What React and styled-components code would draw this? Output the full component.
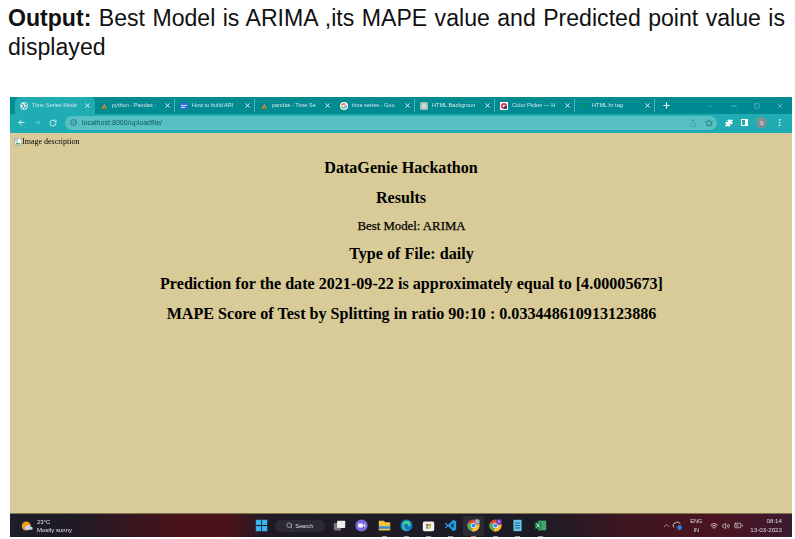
import React from "react";
import styled, { createGlobalStyle } from "styled-components";
import {
  ArrowLeft, ArrowRight, RotateCw, Info, Share, Star, Puzzle, MoreVertical, X, Plus,
  ChevronDown, ChevronUp, Minus, Square, Wifi, Volume2, BatteryMedium, Search,
} from "lucide-react";

const Global = createGlobalStyle`
  html, body { margin: 0; padding: 0; background: #fff; }
  body { width: 795px; height: 539px; overflow: hidden; font-family: "Liberation Sans", Arial, sans-serif; }
`;

const Page = styled.div`
  display: flex; flex-direction: column; height: 539px; box-sizing: border-box;
  padding: 4px 3px 2px 8px;
`;
const Intro = styled.p`
  margin: 0 0 35px; width: 784px; height: 58px;
  font-size: 23.1px; line-height: 29px; color: #111; word-spacing: 1px;
`;
const Win = styled.div`
  flex: 1; margin-left: 2px; display: flex; flex-direction: column; min-height: 0;
`;
const TabStrip = styled.div`
  height: 17px; background: #008b92; display: flex; align-items: stretch;
  padding-left: 5px; color: #d4eced; flex-shrink: 0;
`;
const Tab = styled.div`
  width: 80px; box-sizing: border-box; display: flex; align-items: center; gap: 4px;
  padding: 0 3px 0 5px; position: relative;
  background: ${p => (p.$active ? "#1fadb3" : "transparent")};
  border-radius: ${p => (p.$active ? "5px 5px 0 0" : "0")};
  border-right: ${p => (p.$sep ? "1px solid #4fb0b4" : "1px solid transparent")};
  margin: ${p => (p.$active ? "0" : "2px 0")};
`;
const TabTitle = styled.span`
  flex: 1; min-width: 0; overflow: hidden; white-space: nowrap;
  font-size: 5.6px; line-height: 13px; color: #cfe8e9; filter: blur(0.2px);
`;
const Fav = styled.svg` width: 8px; height: 8px; flex-shrink: 0; `;
const NewTab = styled.div`
  width: 14px; display: flex; align-items: center; justify-content: center; margin-left: 4px; color: #fff;
`;
const WinButtons = styled.div`
  margin-left: auto; display: flex; align-items: center; gap: 16px; padding-right: 8px; color: #b5dfe1;
`;
const Toolbar = styled.div`
  height: 19px; background: #1fadb3; display: flex; align-items: center; flex-shrink: 0;
  padding: 0 8px 2px 7px; box-sizing: border-box; color: #e6f6f6; gap: 8px;
`;
const Nav = styled.div`
  display: flex; align-items: center; gap: 7px;
`;
const Omni = styled.div`
  width: 655px; height: 14px; border-radius: 7px; background: #57c0c3;
  display: flex; align-items: center; padding: 0 4px 0 5px; box-sizing: border-box; gap: 8px; color: #0d5c60;
`;
const OmniInfo = styled.div`
  flex: 1; display: flex; align-items: center; gap: 5px; min-width: 0;
`;
const Url = styled.span`
  flex: 1; font-size: 7.1px; color: #0c5a5e; filter: blur(0.2px);
`;
const Avatar = styled.div`
  width: 11px; height: 11px; border-radius: 50%; background: #7f8f96; color: #dfe6e8;
  font-size: 6px; display: flex; align-items: center; justify-content: center;
`;
const PanelIcon = styled.div`
  width: 7px; height: 7px; border: 1px solid #fff; border-right-width: 3px; box-sizing: border-box;
`;
const Content = styled.main`
  flex: 1; min-height: 0; background: #d8cb97; color: #000;
  font-family: "Liberation Serif", "Times New Roman", serif; display: flex; flex-direction: column;
`;
const Broken = styled.div`
  display: flex; align-items: center; height: 9px; padding: 4px 0 0 4px;
  font-size: 8px; line-height: 9px; filter: blur(0.15px);
`;
const BrokenIcon = styled.svg` width: 8px; height: 8px; flex-shrink: 0; `;
const Heads = styled.div`
  display: flex; flex-direction: column; align-items: center; padding-top: 7px;
`;
const Head = styled.div`
  height: ${p => p.$h || 30}px; line-height: ${p => p.$h || 30}px; white-space: nowrap;
  font-weight: ${p => (p.$plain ? "normal" : "bold")};
  font-size: ${p => p.$size || 16.13}px;
  margin-left: ${p => (p.$shift ? "21px" : "0")};
  -webkit-text-stroke: ${p => (p.$plain ? "0.25px #000" : "0")};
`;
const Taskbar = styled.footer`
  height: 24px; flex-shrink: 0; color: #eee; display: grid; grid-template-columns: 1fr auto 1fr; align-items: center;
  border-top: 1px solid #7d7350; box-sizing: border-box;
  background: linear-gradient(90deg, #1d1e28 0%, #1f1b26 8%, #4a1218 22%, #4a1319 28%, #201a27 33%, #1c1b25 68%, #3c1620 78%, #4b1420 90%, #3a1a30 100%);
`;
const Weather = styled.div`
  display: flex; align-items: center; gap: 4px; padding-left: 11px;
`;
const WeatherText = styled.div`
  font-size: 6px; line-height: 8px; color: #e5e5e5; filter: blur(0.15px);
`;
const Dock = styled.div`
  display: flex; align-items: center; gap: 9.3px;
`;
const DockIcon = styled.svg` width: 13px; height: 13px; display: block; `;
const DockItem = styled.div`
  width: 13px; height: 22px; display: flex; align-items: center; justify-content: center; position: relative;
  &::before {
    content: ""; position: absolute; inset: 1px -4px;
    border-radius: 2px; background: ${p => (p.$on === "active" ? "rgba(255,255,255,.07)" : "transparent")};
  }
  &::after {
    content: ""; position: absolute; bottom: 0; left: 4px; width: 5px; height: 1px;
    background: ${p => (p.$on === "active" ? "#e0705a" : p.$on ? "#999" : "transparent")};
  }
`;
const SearchPill = styled.div`
  width: 50px; height: 12px; border-radius: 6px; background: #2c2b35; display: flex; align-items: center;
  justify-content: center; gap: 2px; font-size: 5.6px; color: #ddd; margin: 0 -1px 0 -3px;
`;
const Tray = styled.div`
  display: flex; align-items: center; justify-content: flex-end; padding-right: 10px; color: #ddd;
`;
const Lang = styled.div`
  font-size: 5.6px; line-height: 9px; text-align: center; margin: 0 8px 0 7px; filter: blur(0.1px);
`;
const Clock = styled.div`
  font-size: 6.2px; line-height: 8.5px; text-align: right; margin-left: 7px; filter: blur(0.1px);
`;
const TrayIcons = styled.div`
  display: flex; align-items: center; gap: 4px;
`;
const Cloud = styled.svg` width: 11px; height: 11px; margin-left: 1px; `;

const Globe = () => (
  <Fav viewBox="0 0 16 16">
    <circle cx="8" cy="8" r="7.5" fill="#e8f6f6" />
    <path d="M3 4l4 2 1 3-3 1-1 3M10 2l1 3 3 1M9 14l2-4 3-1" stroke="#1b8c92" strokeWidth="2" fill="none" />
  </Fav>
);
const Pandas = () => (
  <Fav viewBox="0 0 16 16">
    <path d="M3 14L9 3l2 5 3 6z" fill="#d08a3a" />
    <path d="M6 14l3-5 2 5z" fill="#8a6a3a" />
  </Fav>
);
const Blog = () => (
  <Fav viewBox="0 0 16 16">
    <rect x="0" y="2" width="16" height="12" fill="#3b6fd6" />
    <rect x="2" y="6" width="12" height="2" fill="#cfdcf6" />
    <rect x="2" y="10" width="8" height="2" fill="#cfdcf6" />
  </Fav>
);
const GLogo = ({ size }) => (
  <svg viewBox="0 0 16 16" width={size} height={size} style={{ flexShrink: 0, display: "block" }}>
    <circle cx="8" cy="8" r="8" fill="#fff" />
    <path d="M3.800 6.400A4.600 4.600 0 0 1 11.200 4.800" stroke="#ea4335" strokeWidth="2.400" fill="none" />
    <path d="M3.800 6.400a4.600 4.600 0 0 0 0 3.200" stroke="#fbbc05" strokeWidth="2.400" fill="none" />
    <path d="M3.800 9.600A4.600 4.600 0 0 0 11.200 11.300" stroke="#34a853" strokeWidth="2.400" fill="none" />
    <path d="M11.200 11.300A4.500 4.500 0 0 0 12.500 8H8" stroke="#4285f4" strokeWidth="2.400" fill="none" />
  </svg>
);
const Grey = () => (
  <Fav viewBox="0 0 16 16">
    <rect width="16" height="16" rx="3" fill="#9fc0bc" />
    <circle cx="8" cy="8" r="5" fill="#c9d8d2" />
  </Fav>
);
const Picker = () => (
  <Fav viewBox="0 0 16 16">
    <rect width="16" height="16" rx="2" fill="#fff" />
    <circle cx="8" cy="8" r="6" fill="#d9263a" />
    <circle cx="8" cy="8" r="2.600" fill="#fff" />
    <path d="M8 8h6v6H8z" fill="#1d3f91" opacity=".8" />
  </Fav>
);
const W3 = () => (
  <Fav viewBox="0 0 16 16">
    <path d="M1 4l2 8 2-6 2 6 2-8" stroke="#0a9a5c" strokeWidth="1.500" fill="none" />
  </Fav>
);

const tabs = [
  { t: "Time Series Mode", i: <Globe />, active: true },
  { t: "python - Pandas :", i: <Pandas />, sep: true },
  { t: "How to build ARI", i: <Blog />, sep: true },
  { t: "pandas - Time Se", i: <Pandas /> },
  { t: "time series - Goo", i: <GLogo size={8} />, sep: true },
  { t: "HTML Backgroun", i: <Grey />, sep: true },
  { t: "Color Picker — H", i: <Picker />, sep: true },
  { t: "HTML br tag", i: <W3 />, sep: true },
];

const Chrome = ({ badge, letter }) => (
  <DockIcon viewBox="0 0 16 16" style={{ position: "relative" }}>
    <circle cx="8" cy="8" r="7.500" fill="#ea4335" />
    <path d="M8 8L1.500 4.200A7.500 7.500 0 0 0 6 15.200z" fill="#4caf50" />
    <path d="M8 8l-2 7.200A7.500 7.500 0 0 0 15 6H8z" fill="#fbc02d" />
    <circle cx="8" cy="8" r="3.400" fill="#fff" />
    <circle cx="8" cy="8" r="2.600" fill="#3f86ee" />
    <circle cx="12.500" cy="3.500" r="3.500" fill={badge} />
    <text x="12.500" y="5.300" fontSize="5" textAnchor="middle" fill="#eee" fontFamily="Liberation Sans, sans-serif">{letter}</text>
  </DockIcon>
);

export default function App() {
  return (
    <>
      <Global />
      <Page>
        <Intro>
          <b>Output:</b> Best Model is ARIMA ,its MAPE value and Predicted point value is displayed
        </Intro>
        <Win>
          <TabStrip>
            {tabs.map((x, i) => (
              <Tab key={i} $active={x.active} $sep={x.sep}>
                {x.i}
                <TabTitle>{x.t}</TabTitle>
                <X size={7} strokeWidth={3} color="#fff" />
              </Tab>
            ))}
            <NewTab><Plus size={9} strokeWidth={3} /></NewTab>
            <WinButtons>
              <ChevronDown size={8} strokeWidth={1.5} color="#4fb4b8" />
              <Minus size={8} strokeWidth={1.5} />
              <Square size={6} strokeWidth={1.5} />
              <X size={8} strokeWidth={1.5} />
            </WinButtons>
          </TabStrip>
          <Toolbar>
            <Nav>
              <ArrowLeft size={9} strokeWidth={2.4} />
              <ArrowRight size={9} strokeWidth={2} color="#6fcace" />
              <RotateCw size={8} strokeWidth={2.4} />
            </Nav>
            <Omni>
              <OmniInfo>
                <Info size={7} strokeWidth={2.2} />
                <Url>localhost:8000/uploadfile/</Url>
              </OmniInfo>
              <Share size={8} strokeWidth={1.6} color="#2f8d92" />
              <Star size={8} strokeWidth={2} color="#0f5a5e" />
            </Omni>
            <Puzzle size={8} fill="#fff" color="#fff" />
            <PanelIcon />
            <Avatar>S</Avatar>
            <MoreVertical size={9} strokeWidth={2.4} />
          </Toolbar>
          <Content>
            <Broken>
              <BrokenIcon viewBox="0 0 16 16">
                <path d="M1 1h10l4 4v10H1z" fill="#fff" stroke="#8a8a8a" />
                <path d="M2 13l4-5 3 3 2-2 3 4z" fill="#5aa55a" />
                <path d="M2 2h6v5H2z" fill="#a9c6ee" />
              </BrokenIcon>
              Image description
            </Broken>
            <Heads>
              <Head>DataGenie Hackathon</Head>
              <Head>Results</Head>
              <Head $size={12.8} $h={26} $plain $shift>Best Model: ARIMA</Head>
              <Head $shift>Type of File: daily</Head>
              <Head $shift>Prediction for the date 2021-09-22 is approximately equal to [4.00005673]</Head>
              <Head $shift>MAPE Score of Test by Splitting in ratio 90:10 : 0.033448610913123886</Head>
            </Heads>
          </Content>
          <Taskbar>
            <Weather>
              <svg viewBox="0 0 16 16" width="12" height="12">
                <circle cx="7" cy="8" r="6" fill="#f39a1e" />
                <path d="M6 13a3 3 0 0 1 1-5 3.500 3.500 0 0 1 6 1 2 2 0 0 1 1 4z" fill="#bcd6f2" />
              </svg>
              <WeatherText>23°C<br />Mostly sunny</WeatherText>
            </Weather>
            <Dock>
              <DockItem>
                <DockIcon viewBox="0 0 16 16">
                  <path d="M1 1h6.500v6.500H1zM8.500 1H15v6.500H8.500zM1 8.500h6.500V15H1zM8.500 8.500H15V15H8.500z" fill="#35b6f0" />
                </DockIcon>
              </DockItem>
              <SearchPill><Search size={7} strokeWidth={2} />Search</SearchPill>
              <DockItem>
                <DockIcon viewBox="0 0 16 16">
                  <rect x="1" y="5" width="9" height="9" rx="1" fill="#777" />
                  <rect x="5" y="2" width="10" height="9" rx="1" fill="#eee" />
                </DockIcon>
              </DockItem>
              <DockItem>
                <DockIcon viewBox="0 0 16 16">
                  <circle cx="8" cy="8" r="7.500" fill="#7b6be0" />
                  <rect x="4" y="5.500" width="5.500" height="5" rx="1" fill="#fff" />
                  <path d="M10 8l2.500-2v4z" fill="#fff" />
                </DockIcon>
              </DockItem>
              <DockItem $on>
                <DockIcon viewBox="0 0 16 16">
                  <path d="M1 2h6l2 2h6v10H1z" fill="#f6c244" />
                  <rect x="1" y="9" width="14" height="3" fill="#2f8fe0" />
                </DockIcon>
              </DockItem>
              <DockItem $on>
                <DockIcon viewBox="0 0 16 16">
                  <circle cx="8" cy="8" r="7.500" fill="#1173c9" />
                  <path d="M3 7a5 5 0 0 1 10 0c0 2-2 2-3 2 .5-2-1-3.500-3-3-2 .5-3 3-1 6 1 1 3 2 6 0-2 3-7 3-9-1z" fill="#3fd08c" />
                </DockIcon>
              </DockItem>
              <DockItem $on>
                <DockIcon viewBox="0 0 16 16">
                  <rect x="1" y="3" width="14" height="12" rx="2" fill="#f1f1f1" />
                  <path d="M5 6h2.800v2.800H5z" fill="#ea4335" />
                  <path d="M8.300 6H11v2.800H8.300z" fill="#7cb342" />
                  <path d="M5 9.200h2.800V12H5z" fill="#29a3e8" />
                  <path d="M8.300 9.200H11V12H8.300z" fill="#fbbc05" />
                </DockIcon>
              </DockItem>
              <DockItem $on>
                <DockIcon viewBox="0 0 16 16">
                  <path d="M11.500 1L15 2.700v10.600L11.500 15 5 9l-3 2.500L1 10.500 3.500 8 1 5.500 2 4.500 5 7zM11.500 5L8 8l3.500 3z" fill="#1e9de6" />
                </DockIcon>
              </DockItem>
              <DockItem $on="active">
                <Chrome badge="#8a8f96" letter="S" />
              </DockItem>
              <DockItem $on>
                <Chrome badge="#6a2fb0" letter="K" />
              </DockItem>
              <DockItem $on>
                <DockIcon viewBox="0 0 16 16">
                  <rect x="3" y="1" width="10" height="14" fill="#67c3e8" />
                  <path d="M5 5h6M5 8h6M5 11h6" stroke="#10506c" strokeWidth="1" />
                </DockIcon>
              </DockItem>
              <DockItem $on>
                <DockIcon viewBox="0 0 16 16">
                  <rect x="5" y="2" width="10" height="12" fill="#3fa36b" />
                  <rect x="1" y="4" width="8" height="8" fill="#107c41" />
                  <path d="M3 5.500l4 5M7 5.500l-4 5" stroke="#fff" strokeWidth="1" />
                </DockIcon>
              </DockItem>
            </Dock>
            <Tray>
              <ChevronUp size={9} strokeWidth={1.6} />
              <Cloud viewBox="0 0 16 16">
                <path d="M3 11a4 4 0 0 1 2-7 4.500 4.500 0 0 1 7 2" stroke="#ddd" strokeWidth="1.300" fill="none" />
                <circle cx="11" cy="11" r="3.500" fill="#2f80ed" />
              </Cloud>
              <Lang>ENG<br />IN</Lang>
              <TrayIcons>
                <Wifi size={8} strokeWidth={2.4} />
                <Volume2 size={8} strokeWidth={2} />
                <BatteryMedium size={9} strokeWidth={1.8} />
              </TrayIcons>
              <Clock>08:14<br />13-03-2023</Clock>
            </Tray>
          </Taskbar>
        </Win>
      </Page>
    </>
  );
}
